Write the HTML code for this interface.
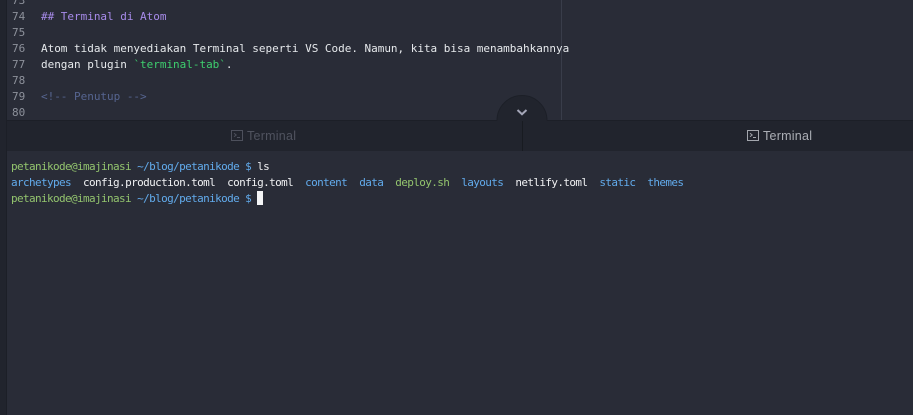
<!DOCTYPE html>
<html><head><meta charset="utf-8">
<style>
html,body{margin:0;padding:0;width:913px;height:415px;overflow:hidden;background:#292c37}
.a{position:absolute;white-space:pre}
.m{font:11px/16px "DejaVu Sans Mono",monospace;letter-spacing:-.02px}
.t{font:11px/16px "DejaVu Sans Mono",monospace;letter-spacing:-.62px}
.n{color:#8d919b;left:12px}
.c{color:#e6e9ec;left:41px}
.g{color:#93c46e}.b{color:#62abec}.w{color:#f0f1f3}
.tab{font:12.5px/16px "Liberation Sans",sans-serif;letter-spacing:.25px}
</style></head><body>
<div class="a" style="left:0;top:0;width:6px;height:415px;background:#21242d;border-right:1px solid #1c1f27"></div>
<div class="a" style="left:561px;top:0;width:1px;height:121px;background:#393d4a"></div>

<div class="a m n" style="top:-7px">73</div>
<div class="a m n" style="top:9px">74</div>
<div class="a m n" style="top:25px">75</div>
<div class="a m n" style="top:41px">76</div>
<div class="a m n" style="top:57px">77</div>
<div class="a m n" style="top:73px">78</div>
<div class="a m n" style="top:89px">79</div>
<div class="a m n" style="top:105px">80</div>

<div class="a m" style="left:41px;top:9px;color:#a78bea">## Terminal di Atom</div>
<div class="a m c" style="top:41px">Atom tidak menyediakan Terminal seperti VS Code. Namun, kita bisa menambahkannya</div>
<div class="a m c" style="top:57px">dengan plugin <span style="color:#3ecf6e">`terminal-tab`</span>.</div>
<div class="a m" style="left:41px;top:89px;color:#566590">&lt;!-- Penutup --&gt;</div>

<svg class="a" style="left:0;top:90px" width="913" height="62" viewBox="0 90 913 62">
<rect x="7" y="121" width="906" height="30" fill="#21242d"/>
<path d="M497 121 A25 25 0 0 1 547 121 Z" fill="#21242d"/>
<path d="M497 120.5 A25 25 0 0 1 547 120.5" fill="none" stroke="#1c1f27"/>
<rect x="7" y="120" width="490" height="1" fill="#1c1f27"/>
<rect x="547" y="120" width="366" height="1" fill="#1c1f27"/>
<rect x="522" y="121" width="1" height="30" fill="#181b21"/>
<path d="M517.5 110 L522 114.2 L526.5 110" fill="none" stroke="#a4a6b8" stroke-width="2"/>
<g fill="none" stroke="#4d505c"><rect x="231.5" y="130.5" width="11" height="10"/><path d="M234 133.2 L236.2 135 L234 136.8 M237 137.5 H240"/></g>
<g fill="none" stroke="#a3a6ad"><rect x="747.5" y="130.5" width="11" height="10"/><path d="M750 133.2 L752.2 135 L750 136.8 M753 137.5 H756"/></g>
</svg>
<div class="a tab" style="left:247px;top:128px;color:#50535f">Terminal</div>
<div class="a tab" style="left:763px;top:128px;color:#abaeb5">Terminal</div>

<div class="a t" style="left:11px;top:159px"><span class="g">petanikode@imajinasi</span> <span class="b">~/blog/petanikode</span> <span class="b">$</span> <span class="w">ls</span></div>
<div class="a t" style="left:11px;top:175px"><span class="b">archetypes</span>  <span class="w">config.production.toml</span>  <span class="w">config.toml</span>  <span class="b">content</span>  <span class="b">data</span>  <span class="g">deploy.sh</span>  <span class="b">layouts</span>  <span class="w">netlify.toml</span>  <span class="b">static</span>  <span class="b">themes</span></div>
<div class="a t" style="left:11px;top:191px"><span class="g">petanikode@imajinasi</span> <span class="b">~/blog/petanikode</span> <span class="b">$</span></div>
<div class="a" style="left:257px;top:191px;width:6px;height:14px;background:#f4f5f6"></div>
</body></html>
